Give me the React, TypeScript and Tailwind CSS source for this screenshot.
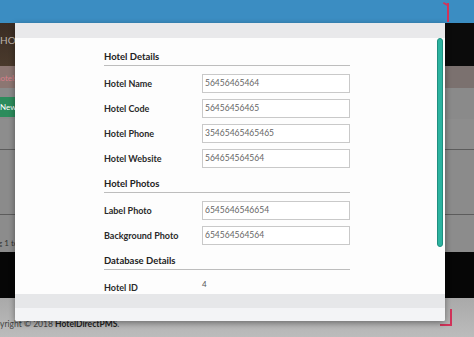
const FONT = { fontFamily: 'Lato, "Noto Sans", sans-serif' };

function Field({ label, value }: { label: string; value: string }) {
  return (
    <div className="flex items-center h-[19px] mb-[6px]">
      <div className="w-[98px] text-[9px] font-bold text-[#2a2a2a]">{label}</div>
      <div className="flex-1 h-[19px] border border-[#c9c9c9] bg-white flex items-center px-[2px] text-[8.5px] text-[#666]">
        {value}
      </div>
    </div>
  );
}

function Section({ title }: { title: string }) {
  return (
    <div className="border-b border-[#bdbdbd] pb-[2px] mb-[8px] text-[9.5px] font-bold text-[#222] leading-[12px]">
      {title}
    </div>
  );
}

export default function App() {
  return (
    <div className="relative w-[474px] h-[337px] overflow-hidden bg-[#999]" style={FONT}>
      {/* page behind the modal */}
      <div className="h-[23px] bg-[#3b8dc2]" />
      <div className="flex h-[43px]">
        <div className="w-[60px] bg-gradient-to-b from-[#3a2c24] to-[#4a3a2c] text-[#bfb5ad] text-[10px] pt-[10px]">HOTEL</div>
        <div className="flex-1 bg-[#0b0b0b]" />
      </div>
      <div className="flex h-[22px]">
        <div className="w-[60px] bg-[#8c7672] text-[#d77e8a] text-[8px] pt-[6px] -ml-[4px]">hotels</div>
        <div className="flex-1 bg-[#7b716f]" />
      </div>
      <div className="h-[31px] bg-[#8a8a8a] pt-[9px]">
        <div className="w-[15px] h-[20px] bg-[#2c8c5c] text-white text-[8px] leading-[20px] overflow-hidden whitespace-nowrap">New</div>
      </div>
      <div className="h-[31px] bg-[#8d8d8d] border-b border-[#5c5c5c]" />
      <div className="h-[65px] bg-[#8b8b8b] border-b border-[#5c5c5c]" />
      <div className="h-[37px] bg-[#8c8c8c] text-[#333] text-[8px] pt-[22px] -ml-[2px] whitespace-nowrap">g 1 to 1</div>
      <div className="h-[46px] bg-[#060606]" />
      <div className="h-[39px] bg-gradient-to-b from-[#a9a9a9] to-[#bcbcbc] text-[8.5px] text-[#444] -ml-[15px] pt-[21px] whitespace-nowrap leading-[10px]">
        Copyright © 2018 <span className="font-bold text-[#222]">HotelDirectPMS</span>.
      </div>

      {/* red annotation marks */}
      <div className="absolute left-[447px] top-[3px] w-[2px] h-[19px] bg-[#d2335a]" />
      <div className="absolute left-[443px] top-[3px] w-[5px] h-[2px] bg-[#d2335a] rotate-[30deg]" />
      <div className="absolute left-[450px] top-[309px] w-[2px] h-[16px] bg-[#d2335a]" />
      <div className="absolute left-[440px] top-[324px] w-[12px] h-[2px] bg-[#d2335a]" />

      {/* modal */}
      <div className="absolute left-[15px] top-[23px] w-[430px] h-[298px] flex flex-col bg-white rounded-b-[2px] shadow-[0_2px_6px_rgba(0,0,0,0.4)]">
        <div className="h-[15px] bg-[#e9e9eb] shrink-0" />
        <div className="relative flex-1 bg-[#fdfdfd] overflow-hidden">
          <div className="w-[246px] ml-[89px] pt-[13px]">
            <Section title="Hotel Details" />
            <Field label="Hotel Name" value="56456465464" />
            <Field label="Hotel Code" value="56456456465" />
            <Field label="Hotel Phone" value="35465465465465" />
            <Field label="Hotel Website" value="564654564564" />
            <div className="h-[4px]" />
            <Section title="Hotel Photos" />
            <Field label="Label Photo" value="6545646546654" />
            <Field label="Background Photo" value="654564564564" />
            <div className="h-[4px]" />
            <Section title="Database Details" />
            <div className="flex">
              <div className="w-[98px] text-[9px] font-bold text-[#2a2a2a] pt-[3px]">Hotel ID</div>
              <div className="text-[8px] text-[#555]">4</div>
            </div>
          </div>
          <div className="absolute right-[2px] top-[0px] w-[6px] h-[209px] rounded-full bg-[#2db3a0] border border-[#1f8f80]" />
        </div>
        <div className="h-[14px] bg-[#e6e7e9] shrink-0" />
        <div className="h-[13px] bg-[#f3f4f6] shrink-0 rounded-b-[2px]" />
      </div>
    </div>
  );
}
